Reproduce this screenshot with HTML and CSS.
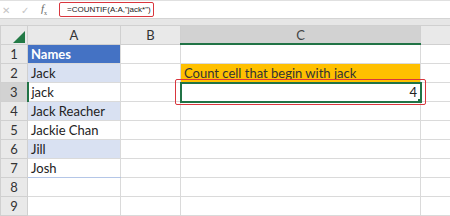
FILE: index.html
```html
<!DOCTYPE html>
<html lang="en">
<head>
  <meta charset="UTF-8">
  <title>COUNTIF jack*</title>
  <link rel="stylesheet" href="styles.css">
</head>
<body>
  <div class="formula-bar">
    <div class="fb-icons">
      <span class="ic ic-x">✕</span>
      <span class="ic ic-ok">✓</span>
      <span class="ic ic-fx"><i>f</i><sub>x</sub></span>
    </div>
    <div class="formula">=COUNTIF(A:A,"jack*")</div>
  </div>

  <div class="sheet">
    <table class="grid">
      <colgroup>
        <col class="col-rh">
        <col class="col-a">
        <col class="col-b">
        <col class="col-c">
        <col class="col-d">
      </colgroup>
      <thead>
        <tr>
          <th class="corner"><span class="tri"></span></th>
          <th>A</th>
          <th>B</th>
          <th class="sel-col">C</th>
          <th></th>
        </tr>
      </thead>
      <tbody>
        <tr><th>1</th><td class="names">Names</td><td></td><td></td><td></td></tr>
        <tr><th>2</th><td class="band">Jack</td><td></td><td class="label">Count cell that begin with jack</td><td></td></tr>
        <tr><th class="sel-row">3</th><td class="plain">jack</td><td></td><td class="result"><span class="val">4</span></td><td></td></tr>
        <tr><th>4</th><td class="band">Jack Reacher</td><td></td><td></td><td></td></tr>
        <tr><th>5</th><td class="plain">Jackie Chan</td><td></td><td></td><td></td></tr>
        <tr><th>6</th><td class="band">Jill</td><td></td><td></td><td></td></tr>
        <tr><th>7</th><td class="plain last">Josh</td><td></td><td></td><td></td></tr>
        <tr><th>8</th><td></td><td></td><td></td><td></td></tr>
        <tr><th>9</th><td></td><td></td><td></td><td></td></tr>
      </tbody>
    </table>
  </div>
</body>
</html>
```

FILE: styles.css
```css
body {
  margin: 0;
  width: 450px;
  height: 216px;
  overflow: hidden;
  background: #e6e6e6;
  font-family: Lato, "Liberation Sans", sans-serif;
  color: #222;
}
.formula-bar {
  display: flex;
  align-items: center;
  height: 17px;
  background: #fff;
  border-top: 1px solid #e0e0e0;
  border-bottom: 1px solid #d4d4d4;
}
.fb-icons {
  display: flex;
  align-items: center;
  width: 59px;
  color: #c4c4c4;
  font-size: 10px;
}
.ic-x { margin-left: 2px; }
.ic-ok { margin-left: 11px; }
.ic-fx {
  margin-left: 12px;
  color: #666;
  font-family: "Liberation Serif", serif;
  font-size: 11px;
}
.ic-fx sub { font-size: 6px; }
.formula {
  height: 13px;
  width: 86px;
  padding-left: 7px;
  border: 1.5px solid #d9363e;
  border-radius: 2px;
  font-family: "Liberation Sans", sans-serif;
  font-size: 8px;
  line-height: 13px;
  color: #222;
}
.sheet {
  padding-top: 6px;
}
.grid {
  border-collapse: collapse;
  table-layout: fixed;
  width: 450px;
  background: #fff;
}
.col-rh { width: 27px; }
.col-a { width: 93px; }
.col-b { width: 60px; }
.col-c { width: 240px; }
.col-d { width: 30px; }
.grid th, .grid td {
  padding: 0;
  height: 18px;
  border: 1px solid #dadada;
  font-size: 13px;
  white-space: nowrap;
  overflow: hidden;
}
.grid thead th {
  height: 17px;
  background: #e9e9e9;
  border-color: #d0d0d0;
  font-weight: normal;
  color: #333;
  font-size: 13px;
}
.grid thead th.sel-col {
  background: #d2d2d2;
  border-bottom: 2px solid #217346;
  color: #444;
}
.corner {
  position: relative;
}
.tri {
  position: absolute;
  right: 2px;
  bottom: 1px;
  width: 0;
  height: 0;
  border-left: 12px solid transparent;
  border-bottom: 12px solid #237a46;
}
.grid tbody th {
  background: #e9e9e9;
  border-color: #d0d0d0;
  font-weight: normal;
  color: #333;
  font-size: 13px;
}
.grid tbody th.sel-row {
  background: #d2d2d2;
  border-right: 2px solid #217346;
}
.grid td {
  padding-left: 3px;
}
.names {
  background: #4472c4;
  color: #fff;
  font-weight: bold;
}
.band {
  background: #d9e1f2;
  border-right-color: #b4c6e7;
}
.plain {
  border-right-color: #b4c6e7;
}
.grid td.last {
  border-bottom-color: #b4c6e7;
}
.label {
  background: #ffc000;
  color: #333;
}
.grid td.result {
  position: relative;
  overflow: visible;
  text-align: right;
  outline: 2px solid #217346;
  outline-offset: -1px;
}
.result .val {
  padding-right: 3px;
}
.result::before {
  content: "";
  position: absolute;
  right: -2px;
  bottom: -2px;
  width: 4px;
  height: 4px;
  background: #217346;
}
.result::after {
  content: "";
  position: absolute;
  left: -6px;
  right: -6px;
  top: -4px;
  bottom: -4px;
  border: 1.5px solid #d9363e;
  border-radius: 2px;
}
```
